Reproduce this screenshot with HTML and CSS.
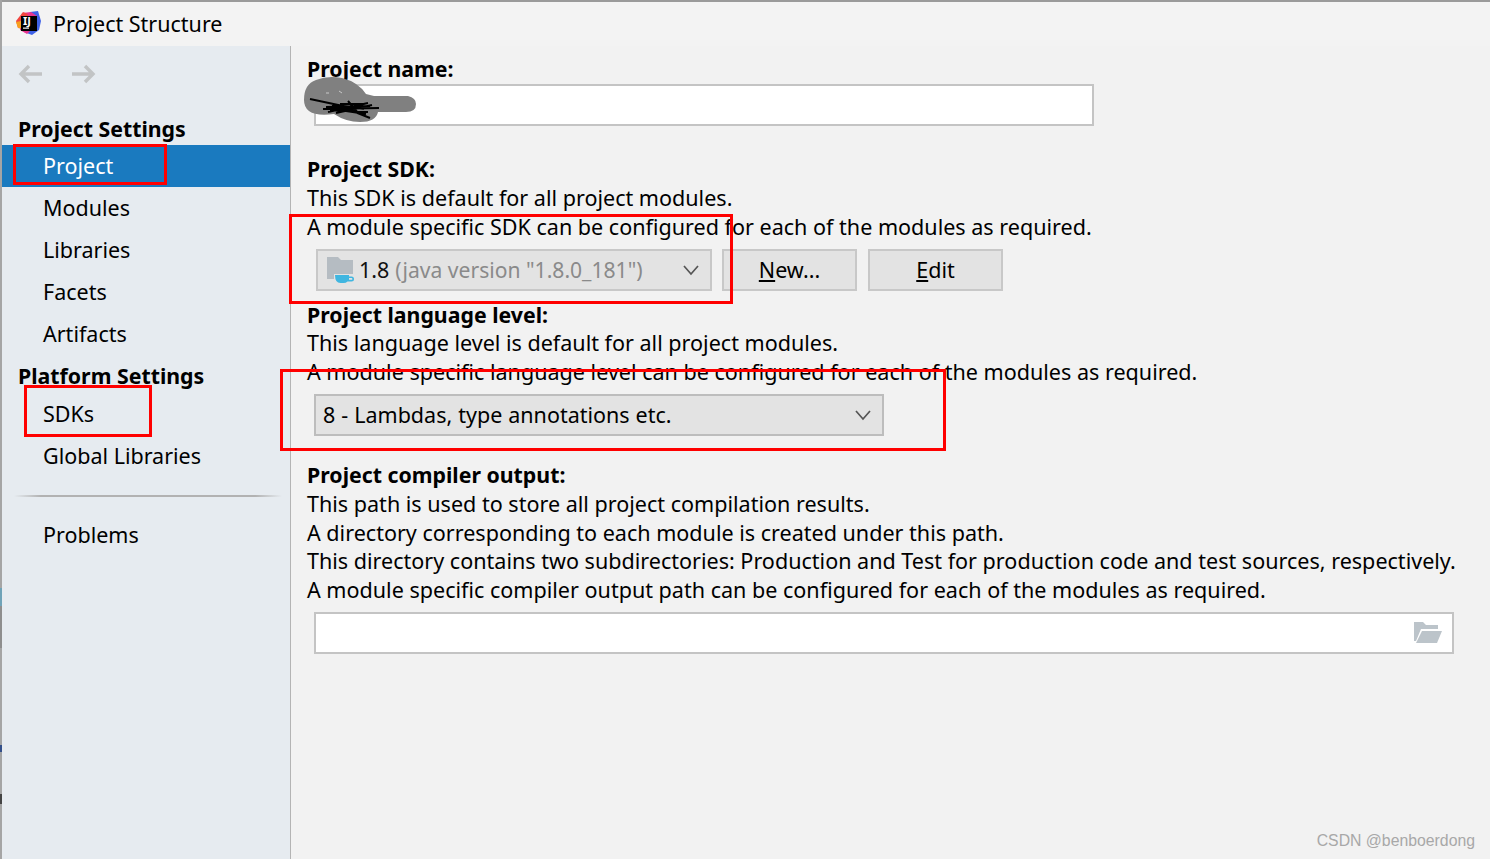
FILE: index.html
```html
<!DOCTYPE html>
<html lang="en">
<head>
  <meta charset="UTF-8">
  <meta name="viewport" content="width=device-width, initial-scale=1.0">
  <title>Project Structure</title>
  <link rel="stylesheet" href="styles.css">
</head>
<body>
  <div class="window">
    <div class="titlebar">
      <svg class="app-icon" width="26" height="26" viewBox="0 0 26 26">
        <path d="M15 2 L23 1 L26 11 L24 20 L17 25 L9 22 Z" fill="#3f62e8"/>
        <path d="M7 3 L16 2 L22 6 L22 14 L12 24 L5 20 Z" fill="#e8358f"/>
        <path d="M1 11 L8 2 L13 4 L8 19 L3 18 Z" fill="#f2463f"/>
        <path d="M1 12 L6 11 L6 18 L3 18 Z" fill="#f8a01e"/>
        <rect x="6" y="6" width="16" height="15" fill="#000"/>
        <rect x="8" y="17.500" width="6" height="1.300" fill="#ddd"/>
        <text x="8" y="15" class="app-icon-text">IJ</text>
      </svg>
      <span class="title">Project Structure</span>
    </div>

    <div class="body">
      <div class="sidebar">
        <div class="nav-arrows">
          <svg width="26" height="20" viewBox="0 0 26 20"><path d="M24 10H3M11 2L3 10l8 8" fill="none" stroke="#c2c4c5" stroke-width="3.400"/></svg>
          <svg width="26" height="20" viewBox="0 0 26 20"><path d="M2 10h21M15 2l8 8-8 8" fill="none" stroke="#c2c4c5" stroke-width="3.400"/></svg>
        </div>
        <div class="side-heading first">Project Settings</div>
        <div class="side-item selected">Project</div>
        <div class="side-item">Modules</div>
        <div class="side-item">Libraries</div>
        <div class="side-item">Facets</div>
        <div class="side-item">Artifacts</div>
        <div class="side-heading">Platform Settings</div>
        <div class="side-item">SDKs</div>
        <div class="side-item">Global Libraries</div>
        <div class="side-sep"></div>
        <div class="side-item">Problems</div>
      </div>

      <div class="content">
        <div class="label">Project name:</div>
        <div class="field name-field"></div>

        <div class="label sdk-label">Project SDK:</div>
        <div class="line">This SDK is default for all project modules.</div>
        <div class="line">A module specific SDK can be configured for each of the modules as required.</div>
        <div class="row">
          <div class="combo sdk-combo">
            <svg class="sdk-icon" width="30" height="30" viewBox="0 0 30 30">
              <path d="M1 3h11l3 3h12v14H8v5H1z" fill="#b5bcc2"/>
              <path d="M9 21h14v1.500h2.500a2.500 2.500 0 0 1 0 5H21.500q-1.500 1.500-4 1.500h-3q-5.500 0-5.500-8z" fill="#40b6e0"/>
              <path d="M23 24h2.500a.8.8 0 0 1 0 1.800H23z" fill="#e3e3e3"/>
            </svg>
            <span>1.8</span><span class="muted">(java version "1.8.0_181")</span>
            <svg class="chevron sdk-chevron" width="18" height="12" viewBox="0 0 18 12"><path d="M2 2l7 8 7-8" fill="none" stroke="#555" stroke-width="1.700"/></svg>
          </div>
          <div class="btn new-btn"><span><u>N</u>ew...</span></div>
          <div class="btn edit-btn"><span><u>E</u>dit</span></div>
        </div>

        <div class="label level-label">Project language level:</div>
        <div class="line">This language level is default for all project modules.</div>
        <div class="line">A module specific language level can be configured for each of the modules as required.</div>
        <div class="combo level-combo">
          <span>8 - Lambdas, type annotations etc.</span>
          <svg class="chevron" width="18" height="12" viewBox="0 0 18 12"><path d="M2 2l7 8 7-8" fill="none" stroke="#555" stroke-width="1.700"/></svg>
        </div>

        <div class="label output-label">Project compiler output:</div>
        <div class="line">This path is used to store all project compilation results.</div>
        <div class="line">A directory corresponding to each module is created under this path.</div>
        <div class="line">This directory contains two subdirectories: Production and Test for production code and test sources, respectively.</div>
        <div class="line">A module specific compiler output path can be configured for each of the modules as required.</div>
        <div class="field output-field">
          <svg width="28" height="22" viewBox="0 0 28 22">
            <path d="M0 0h9l3 3h12v4H7L2 19H0z" fill="#bcc4ca"/>
            <path d="M8 9h20l-5 12H2z" fill="#bcc4ca"/>
          </svg>
        </div>
      </div>
    </div>
  </div>

  <!-- scribble over the project name -->
  <svg class="scribble" width="118" height="50" viewBox="0 0 118 50">
    <path d="M2 24 Q2 8 14 4 Q26 -1 40 2 Q56 6 64 18 L72 20 H106 Q114 22 114 28 Q114 36 104 36 H76 Q74 46 58 46 Q44 46 32 38 Q2 42 2 24Z" fill="#808080"/>
    <path d="M8 23L41 30M21 33L77 32M48 34L68 42M26 36L66 27M30 29L62 33M34 37L70 29M46 25L56 37M28 34L66 36M24 31L68 30M38 28L62 28M44 35L64 38" stroke="#000" stroke-width="2" fill="none"/>
    <path d="M24 17h3M37 15l3 2" stroke="#c8c8c8" stroke-width="1" fill="none"/>
  </svg>

  <!-- red marks drawn on the screenshot -->
  <div class="mark mark-project"></div>
  <div class="mark mark-sdks"></div>
  <div class="mark mark-sdk"></div>
  <div class="mark mark-level"></div>

  <div class="edge"></div>
  <div class="watermark">CSDN @benboerdong</div>
</body>
</html>
```

FILE: styles.css
```css
* {
  box-sizing: border-box;
}

html, body {
  margin: 0;
  height: 100%;
  overflow: hidden;
}

body {
  font-family: "Noto Sans", "Open Sans", sans-serif;
  font-size: 21.500px;
  color: #000;
  background: #f2f2f2;
  position: relative;
}

.window {
  height: 859px;
  display: flex;
  flex-direction: column;
  border-top: 2px solid #9a9a9a;
  padding-left: 2px;
}

.titlebar {
  height: 44px;
  display: flex;
  align-items: center;
  padding: 0 0 2px 13px;
  background: #f3f3f3;
}

.app-icon {
  margin-right: 12px;
}

.app-icon-text {
  font-size: 11px;
  font-weight: 700;
  fill: #fff;
}

.body {
  flex: 1;
  display: flex;
}

.sidebar {
  width: 289px;
  background: #e6ebf0;
  border-right: 1px solid #b4b4b4;
}

.nav-arrows {
  height: 54px;
  padding: 18px 0 0 16px;
  display: flex;
  gap: 26px;
}

.side-heading {
  height: 38px;
  padding: 4px 0 0 16px;
  line-height: 34px;
  font-weight: 700;
  font-size: 21.300px;
}

.side-heading.first {
  height: 45px;
  padding-top: 12px;
}

.side-item {
  height: 42px;
  line-height: 42px;
  padding-left: 41px;
}

.side-item.selected {
  background: #1a7abf;
  color: #fff;
}

.side-sep {
  height: 2px;
  margin: 18px 8px 17px 12px;
  background: linear-gradient(to right, #e6ebf0, #b2b2b2 10%, #b2b2b2 90%, #e6ebf0);
}

.content {
  flex: 1;
  padding: 8px 0 0 16px;
}

.label {
  font-weight: 700;
  font-size: 21.300px;
  line-height: 30px;
}

.line {
  font-size: 21.560px;
  line-height: 28.500px;
  white-space: nowrap;
}

.sdk-label {
  margin-top: 28px;
}

.level-label {
  margin: 9px 0 -1px;
}

.output-label {
  margin-top: 24px;
}

.field {
  height: 42px;
  margin-left: 7px;
  background: #fff;
  border: 2px solid #c4c4c4;
}

.name-field {
  width: 780px;
}

.output-field {
  width: 1140px;
  margin-top: 8px;
  display: flex;
  align-items: center;
  justify-content: flex-end;
  padding-right: 10px;
}

.row {
  display: flex;
  margin: 8px 0 0 9px;
}

.combo {
  height: 42px;
  display: flex;
  align-items: center;
  background: #e3e3e3;
  border: 2px solid #c8c8c8;
  padding-bottom: 2px;
  position: relative;
}

.sdk-combo {
  width: 396px;
  padding-left: 8px;
  color: #111;
}

.sdk-icon {
  margin-right: 3px;
}

.muted {
  margin-left: 6px;
  color: #8a8a8a;
  font-size: 21.100px;
}

.level-combo {
  width: 570px;
  margin: 8px 0 0 7px;
  padding-left: 7px;
  border-color: #bdbdbd;
  word-spacing: 0.400px;
}

.chevron {
  margin-left: auto;
  margin-right: 10px;
  position: relative;
  top: 1px;
}

.sdk-chevron {
  margin-right: 10px;
}

.btn {
  height: 42px;
  display: flex;
  align-items: center;
  justify-content: center;
  background: #e3e3e3;
  border: 2px solid #c8c8c8;
  padding-bottom: 2px;
}

.new-btn {
  width: 135px;
  margin-left: 10px;
}

.edit-btn {
  width: 135px;
  margin-left: 11px;
}

.scribble {
  position: absolute;
  left: 302px;
  top: 76px;
}

.mark {
  position: absolute;
  border: 3px solid #f00;
}

.mark-project {
  left: 13px;
  top: 144px;
  width: 154px;
  height: 41px;
}

.mark-sdks {
  left: 24px;
  top: 385px;
  width: 128px;
  height: 52px;
}

.mark-sdk {
  left: 289px;
  top: 214px;
  width: 444px;
  height: 90px;
}

.mark-level {
  left: 280px;
  top: 369px;
  width: 666px;
  height: 82px;
}

/* bit of the desktop showing down the left side */
.edge {
  position: absolute;
  left: 0;
  top: 0;
  width: 2px;
  height: 859px;
  background: linear-gradient(to bottom, #a5a5a5 0, #a5a5a5 588px, #6fa3b8 588px, #6fa3b8 606px, #8e8e8e 606px, #8e8e8e 648px, #a5a5a5 648px, #a5a5a5 745px, #34508a 745px, #34508a 752px, #a5a5a5 752px, #a5a5a5 794px, #444 794px, #444 804px, #a5a5a5 804px);
}

.watermark {
  position: absolute;
  right: 15px;
  bottom: 9px;
  font-family: "Liberation Sans", Arial, sans-serif;
  font-size: 15.800px;
  color: #a8a8a8;
}
```
